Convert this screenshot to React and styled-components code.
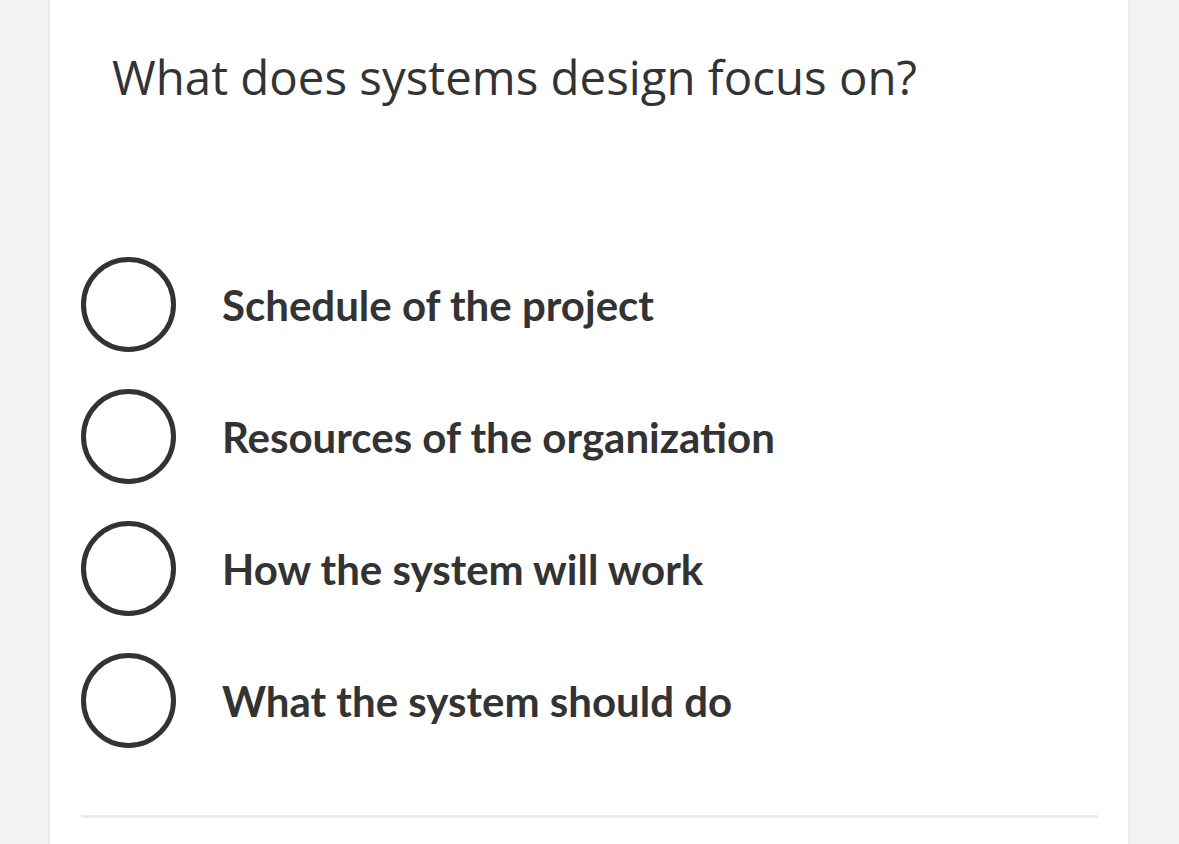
import styled, { createGlobalStyle } from "styled-components";

const GlobalStyle = createGlobalStyle`
    html, body {
        margin: 0;
        padding: 0;
        background: #f2f2f2;
    }
`;

const options = [
    "Schedule of the project",
    "Resources of the organization",
    "How the system will work",
    "What the system should do",
];

const App = () => {
    return (
        <>
            <GlobalStyle />
            <Page>
                <Card>
                    <Question>What does systems design focus on?</Question>
                    <OptionList>
                        {options.map((text) => (
                            <Option key={text}>
                                <Radio />
                                <OptionLabel>{text}</OptionLabel>
                            </Option>
                        ))}
                    </OptionList>
                    <Divider />
                </Card>
            </Page>
        </>
    );
};

export const Page = styled.div`
    display: flex;
    min-height: 844px;
    padding-left: 48px;
    box-sizing: border-box;
`;
export const Card = styled.div`
    width: 1082px;
    min-height: 844px;
    box-sizing: border-box;
    background: #ffffff;
    border-left: 2px solid #ebebeb;
    border-right: 2px solid #ebebeb;
    padding: 44px 30px 0 31px;
    display: flex;
    flex-direction: column;
`;
export const Question = styled.h1`
    margin: 0 0 0 31px;
    font-family: "Open Sans", sans-serif;
    font-weight: 400;
    font-size: 47.4px;
    line-height: 66px;
    color: #333333;
`;
export const OptionList = styled.div`
    display: flex;
    flex-direction: column;
    gap: 37px;
    margin-top: 147px;
`;
export const Option = styled.label`
    display: flex;
    align-items: center;
    gap: 46px;
`;
export const Radio = styled.span`
    width: 95px;
    height: 95px;
    box-sizing: border-box;
    border: 5.5px solid #333333;
    border-radius: 50%;
    flex-shrink: 0;
`;
export const OptionLabel = styled.span`
    font-family: Lato, sans-serif;
    font-weight: 700;
    font-size: 42px;
    color: #333333;
`;
export const Divider = styled.hr`
    margin: 67px 0 0 0;
    border: none;
    height: 3px;
    background: #ebebeb;
`;

export default App;
